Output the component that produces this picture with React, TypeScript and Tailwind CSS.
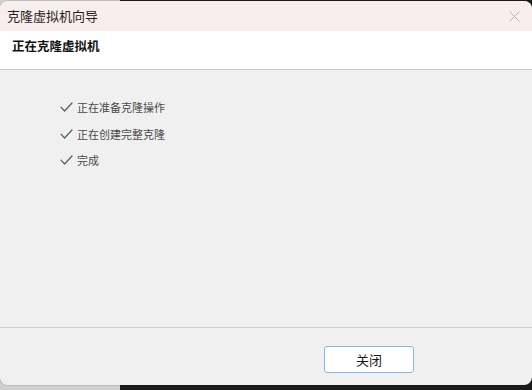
const steps = ['正在准备克隆操作', '正在创建完整克隆', '完成']

function CheckIcon() {
  return (
    <svg width="13" height="10" viewBox="0 0 13 10" fill="none" className="shrink-0">
      <path d="M1 5.2 L4.6 9 L12 1" stroke="#5a5a5a" strokeWidth="1.2" strokeLinecap="round" strokeLinejoin="round" />
    </svg>
  )
}

export default function App() {
  return (
    <div
      className="relative h-[390px] w-[532px] overflow-hidden bg-[linear-gradient(to_right,#cfcfcf_120px,#1c1c1c_120px)]"
      style={{ fontFamily: '"Noto Sans CJK SC", "Noto Sans", sans-serif' }}
    >
      <div className="mt-[1px] flex h-[384px] w-[532px] flex-col overflow-hidden rounded-[8px] bg-[#f0f0f0] shadow-[0_0_0_1px_rgba(0,0,0,0.08)]">
        {/* title bar */}
        <div className="flex h-[30px] shrink-0 items-center justify-between bg-[#f9eeee] pl-[7px] pr-[12px]">
          <span className="text-[13px] text-[#1f1f1f]">克隆虚拟机向导</span>
          <svg width="11" height="11" viewBox="0 0 11 11" fill="none">
            <path d="M0.5 0.5 L10.5 10.5 M10.5 0.5 L0.5 10.5" stroke="#b9b4b4" strokeWidth="1" />
          </svg>
        </div>

        {/* header */}
        <div className="flex h-[39px] shrink-0 items-start border-b border-[#c9c9c9] bg-white pl-[12px] pt-[6px]">
          <span className="text-[12.5px] font-bold text-[#111]">正在克隆虚拟机</span>
        </div>

        {/* steps */}
        <div className="flex flex-1 flex-col gap-[10px] pl-[60px] pt-[29px]">
          {steps.map((s) => (
            <div key={s} className="flex h-[16.5px] items-center gap-[4px]">
              <CheckIcon />
              <span className="text-[11px] text-[#4a4a4a]">{s}</span>
            </div>
          ))}
        </div>

        {/* footer */}
        <div className="flex h-[58px] shrink-0 items-start border-t border-[#cfcfcf] pl-[324px] pt-[18px]">
          <button className="flex h-[27px] w-[90px] items-center justify-center rounded-[3px] border border-[#86b8e8] bg-white text-[13px] text-[#1a1a1a]">
            关闭
          </button>
        </div>
      </div>
    </div>
  )
}
